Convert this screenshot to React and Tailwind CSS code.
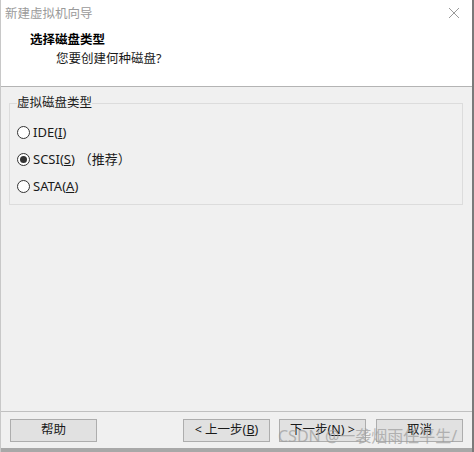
import React from "react";

const FONT = { fontFamily: '"Noto Sans", "Noto Sans CJK SC", sans-serif' };

function Radio({ checked, children }) {
  return (
    <div className="flex items-center h-[16px] gap-[3px]">
      <span className="w-[13px] h-[13px] rounded-full border border-[#333333] bg-white flex items-center justify-center shrink-0">
        {checked && <span className="w-[7px] h-[7px] rounded-full bg-[#333333]" />}
      </span>
      <span className="text-[13px] leading-[16px] text-[#1a1a1a]">{children}</span>
    </div>
  );
}

function Btn({ children, className = "" }) {
  return (
    <button
      className={"w-[87px] h-[23px] bg-[#e1e1e1] border border-[#adadad] text-[12.5px] leading-none text-[#1a1a1a] flex items-center justify-center " + className}
    >
      {children}
    </button>
  );
}

export default function App() {
  return (
    <div className="w-[474px] h-[452px] flex bg-[#f0f0f0] overflow-hidden relative" style={FONT}>
      <div className="w-[472px] h-full flex flex-col border-l border-[#c8c8c8]">
        <div className="bg-white h-[87px] border-b border-[#b4b4b4] flex flex-col shrink-0">
          <div className="h-[28px] flex items-center justify-between pl-[4px] pr-[12px]">
            <span className="text-[12.5px] text-[#9a9a9a]">新建虚拟机向导</span>
            <svg width="12" height="12" viewBox="0 0 12 12" className="mt-[-2px]">
              <path d="M1 1 L11 11 M11 1 L1 11" stroke="#9a9a9a" strokeWidth="1" />
            </svg>
          </div>
          <div className="pl-[29px] mt-[4px] text-[12.5px] leading-[16px] font-bold text-black">选择磁盘类型</div>
          <div className="pl-[55px] mt-[3px] text-[12.5px] leading-[16px] text-[#1a1a1a]">您要创建何种磁盘?</div>
        </div>
        <div className="flex-1 pt-[8px] pl-[8px] pr-[9px]">
          <fieldset className="border border-[#dcdcdc] pl-[7px] pr-[6px] pt-[13px] pb-[10px] flex flex-col gap-[11px]">
            <legend className="text-[12.5px] leading-[16px] text-[#1a1a1a]">虚拟磁盘类型</legend>
            <Radio>
              IDE(<span className="underline">I</span>)
            </Radio>
            <Radio checked>
              SCSI(<span className="underline">S</span>)<span className="ml-[4px]">（推荐）</span>
            </Radio>
            <Radio>
              SATA(<span className="underline">A</span>)
            </Radio>
          </fieldset>
        </div>
        <div className="border-t border-[#c0c0c0] h-[37px] flex items-start pt-[7px] pl-[9px] shrink-0">
          <Btn>帮助</Btn>
          <Btn className="ml-[86px]">&lt; 上一步(<span className="underline">B</span>)</Btn>
          <Btn className="ml-[9px]">下一步(<span className="underline">N</span>) &gt;</Btn>
          <Btn className="ml-[10px]">取消</Btn>
        </div>
        <div className="h-[4px] bg-[#a8a8a8] shrink-0" />
      </div>
      <div className="w-[2px] h-full bg-[#7a7a7a]" />
      <div
        className="absolute left-[278px] top-[427px] text-[16px] leading-[18px] text-[#9c9c9c] opacity-70 whitespace-nowrap pointer-events-none"
      >
        CSDN @一袭烟雨任平生/
      </div>
    </div>
  );
}
